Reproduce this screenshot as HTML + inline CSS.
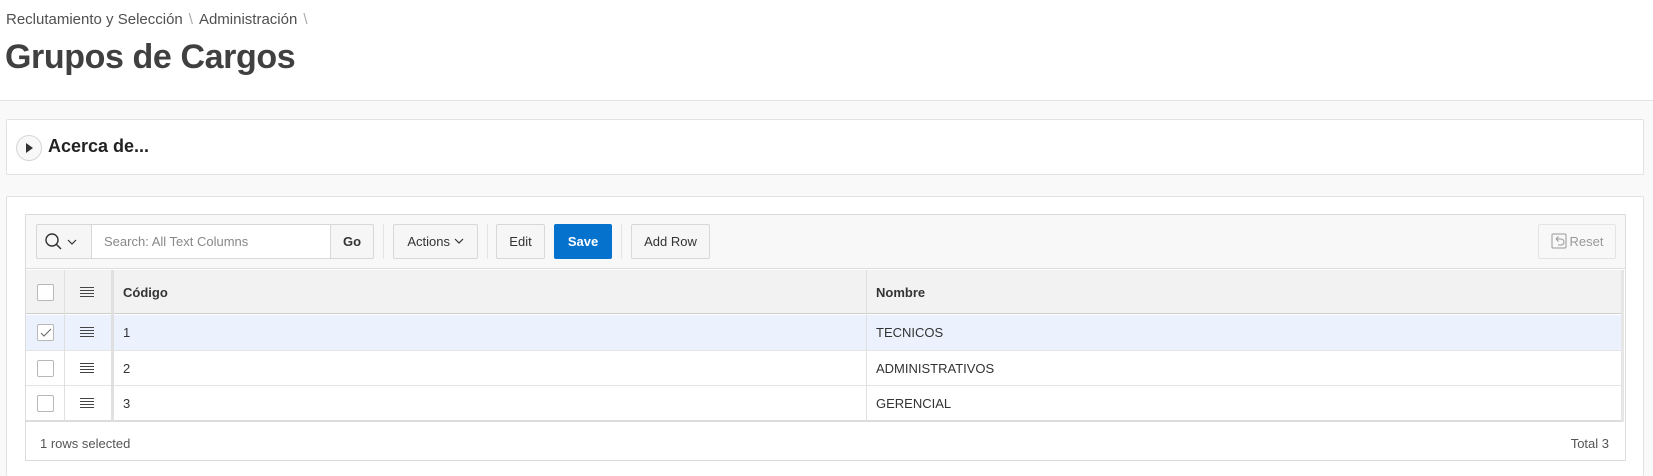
<!DOCTYPE html>
<html style="width:1653px;height:476px;overflow:hidden"><head><meta charset="utf-8"><style>
*{box-sizing:border-box;margin:0;padding:0}
body{width:1653px;height:476px;overflow:hidden;background:#f9f9f9;font-family:"Liberation Sans",sans-serif;color:#333;position:relative}
.a{position:absolute}
.hdr{left:0;top:0;width:1653px;height:101px;background:#fff;border-bottom:1px solid #e4e4e4}
.bc{left:6px;top:11px;font-size:15px;color:#505050}
.bc span{color:#aaa;margin:0 6px}
h1{position:absolute;left:5px;top:38px;font-size:34px;font-weight:bold;color:#404040;letter-spacing:-0.4px}
.reg{background:#fff;border:1px solid #e2e2e2;border-radius:2px}
.btn{position:absolute;top:224px;height:35px;border:1px solid #d8d8d8;background:#f6f6f6;border-radius:2px;font-size:13px;color:#333;text-align:center;line-height:33px}
.sep{position:absolute;top:224px;width:1px;height:35px;background:#e4e4e4}
.cb{position:absolute;left:37px;width:17px;height:17px;border:1px solid #b8b8b8;border-radius:2px;background:#fff}
.ham{position:absolute;left:80px;width:14px;height:10px;border-top:1px solid #444;border-bottom:1px solid #444}
.ham:before,.ham:after{content:"";position:absolute;left:0;width:14px;height:1px;background:#444}
.ham:before{top:2px}.ham:after{top:5px}
.t{position:absolute;font-size:13px;color:#333}
</style></head><body>
<div class="a hdr"></div>
<div class="a bc">Reclutamiento y Selección<span>\</span>Administración<span>\</span></div>
<h1>Grupos de Cargos</h1>

<div class="a reg" style="left:6px;top:119px;width:1638px;height:56px"></div>
<div class="a" style="left:16px;top:135px;width:26px;height:26px;border:1px solid #d6d6d6;border-radius:50%;background:#f8f8f8"></div>
<div class="a" style="left:26px;top:143px;width:0;height:0;border-left:7px solid #333;border-top:5px solid transparent;border-bottom:5px solid transparent"></div>
<div class="a" style="left:48px;top:136px;font-size:18px;font-weight:bold;color:#222">Acerca de...</div>

<div class="a reg" style="left:6px;top:196px;width:1638px;height:280px;border-bottom:none"></div>
<div class="a" style="left:25px;top:214px;width:1601px;height:247px;border:1px solid #dcdcdc;background:#fff"></div>
<div class="a" style="left:26px;top:215px;width:1599px;height:54px;background:#f8f8f8;border-bottom:1px solid #dcdcdc"></div>

<div class="btn" style="left:36px;width:56px"></div>
<svg class="a" style="left:44px;top:232px" width="40" height="22"><circle cx="8" cy="8" r="6" fill="none" stroke="#333" stroke-width="1.4"/><line x1="12.5" y1="12.5" x2="17" y2="17" stroke="#333" stroke-width="1.5"/><polyline points="24,8 28,12 32,8" fill="none" stroke="#333" stroke-width="1.2"/></svg>
<div class="a" style="left:91px;top:224px;width:240px;height:35px;border:1px solid #d8d8d8;background:#fff;font-size:13px;color:#888;line-height:33px;padding-left:12px">Search: All Text Columns</div>
<div class="btn" style="left:330px;width:44px;font-weight:bold">Go</div>
<div class="sep" style="left:383px"></div>
<div class="btn" style="left:393px;width:85px">Actions <svg width="10" height="7" style="vertical-align:1px"><polyline points="1,1 5,5 9,1" fill="none" stroke="#333" stroke-width="1.2"/></svg></div>
<div class="sep" style="left:487px"></div>
<div class="btn" style="left:496px;width:49px">Edit</div>
<div class="btn" style="left:554px;width:58px;background:#0572ce;border-color:#0572ce;color:#fff;font-weight:bold">Save</div>
<div class="sep" style="left:621px"></div>
<div class="btn" style="left:631px;width:79px">Add Row</div>
<div class="btn" style="left:1538px;width:78px;color:#999;background:#f8f8f8;border-color:#e4e4e4"><svg width="16" height="16" style="vertical-align:-3px;margin-right:3px"><rect x="1" y="1" width="14" height="14" rx="1" fill="none" stroke="#999"/><path d="M5 6 H10 A3 3 0 0 1 10 12 H7 M5 6 L7.5 3.5 M5 6 L7.5 8.5" fill="none" stroke="#999"/></svg>Reset</div>

<div class="a" style="left:26px;top:270px;width:1595px;height:44px;background:#f2f2f2;border-bottom:1px solid #cfcfcf"></div>
<div class="a" style="left:26px;top:315px;width:1595px;height:36px;background:#ebf2fd;border-bottom:1px solid #e4e4e4"></div>
<div class="a" style="left:26px;top:351px;width:1595px;height:35px;border-bottom:1px solid #e4e4e4"></div>
<div class="a" style="left:26px;top:386px;width:1595px;height:36px;border-bottom:2px solid #dcdcdc"></div>
<div class="a" style="left:1621px;top:270px;width:3px;height:152px;background:#e6e6e6"></div>
<div class="a" style="left:64px;top:270px;width:1px;height:152px;background:#e0e0e0"></div>
<div class="a" style="left:111px;top:270px;width:3px;height:152px;background:#e0e0e0"></div>
<div class="a" style="left:866px;top:270px;width:1px;height:152px;background:#e0e0e0"></div>

<div class="cb" style="top:284px"></div>
<div class="ham" style="top:287px"></div>
<div class="t" style="left:123px;top:285px;font-weight:bold">Código</div>
<div class="t" style="left:876px;top:285px;font-weight:bold">Nombre</div>

<div class="cb" style="top:324px"></div>
<svg class="a" style="left:40px;top:328px" width="12" height="10"><polyline points="1,5 4,8 11,1" fill="none" stroke="#666" stroke-width="1"/></svg>
<div class="ham" style="top:327px"></div>
<div class="t" style="left:123px;top:325px">1</div>
<div class="t" style="left:876px;top:325px">TECNICOS</div>

<div class="cb" style="top:360px"></div>
<div class="ham" style="top:363px"></div>
<div class="t" style="left:123px;top:361px">2</div>
<div class="t" style="left:876px;top:361px">ADMINISTRATIVOS</div>

<div class="cb" style="top:395px"></div>
<div class="ham" style="top:398px"></div>
<div class="t" style="left:123px;top:396px">3</div>
<div class="t" style="left:876px;top:396px">GERENCIAL</div>

<div class="t" style="left:40px;top:436px;color:#555">1 rows selected</div>
<div class="t" style="left:1560px;top:436px;width:49px;text-align:right;color:#555">Total 3</div>
</body></html>
